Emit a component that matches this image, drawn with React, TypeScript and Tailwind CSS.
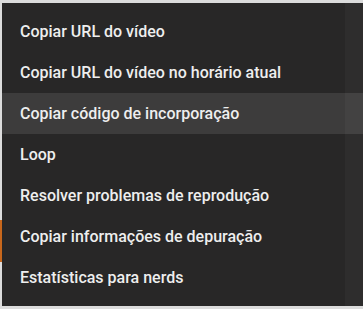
const items = [
  'Copiar URL do vídeo',
  'Copiar URL do vídeo no horário atual',
  'Copiar código de incorporação',
  'Loop',
  'Resolver problemas de reprodução',
  'Copiar informações de depuração',
  'Estatísticas para nerds',
];

export default function App() {
  return (
    <div className="relative h-[309px] w-[363px] overflow-hidden bg-[#dcdcdc]">
      {/* orange bit of the page behind the menu */}
      <div className="absolute left-0 top-[220px] h-[42px] w-[4px] bg-[#c8671c]" />
      <div className="relative ml-[2px] mt-[3px] flex h-[303px] w-[361px] bg-[#282727]">
        <div className="flex flex-1 flex-col py-[8px]">
          {items.map((label, i) => (
            <div
              key={label}
              className={`flex h-[41px] items-center pl-[18px] text-[16px] font-medium text-[#eeeeee] ${
                i === 2 ? 'bg-[#3d3c3c]' : ''
              }`}
              style={{ fontFamily: 'Roboto, "Liberation Sans", sans-serif' }}
            >
              {label}
            </div>
          ))}
        </div>
        <div className="absolute right-0 top-0 h-full w-[18px] bg-white/[0.03]" />
      </div>
    </div>
  );
}
